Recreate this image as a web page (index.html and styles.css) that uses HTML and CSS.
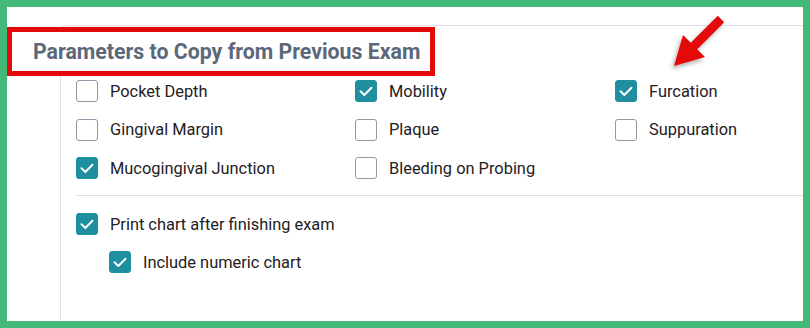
FILE: index.html
```html
<!DOCTYPE html>
<html>
<head>
<meta charset="utf-8">
<link rel="stylesheet" href="styles.css">
</head>
<body>
<div class="frame">
  <div class="card">
    <div class="title-box"><h2 class="title">Parameters to Copy from Previous Exam</h2></div>
    <div class="grid">
      <label class="opt"><span class="cb"></span><span>Pocket Depth</span></label>
      <label class="opt"><span class="cb on"><svg viewBox="0 0 22 22"><polyline points="5.5,11.3 9.3,15 16.5,7.8"/></svg></span><span>Mobility</span></label>
      <label class="opt"><span class="cb on"><svg viewBox="0 0 22 22"><polyline points="5.5,11.3 9.3,15 16.5,7.8"/></svg></span><span>Furcation</span></label>
      <label class="opt"><span class="cb"></span><span>Gingival Margin</span></label>
      <label class="opt"><span class="cb"></span><span>Plaque</span></label>
      <label class="opt"><span class="cb"></span><span>Suppuration</span></label>
      <label class="opt"><span class="cb on"><svg viewBox="0 0 22 22"><polyline points="5.5,11.3 9.3,15 16.5,7.8"/></svg></span><span>Mucogingival Junction</span></label>
      <label class="opt"><span class="cb"></span><span>Bleeding on Probing</span></label>
    </div>
    <div class="divider"></div>
    <label class="opt print"><span class="cb on"><svg viewBox="0 0 22 22"><polyline points="5.5,11.3 9.3,15 16.5,7.8"/></svg></span><span>Print chart after finishing exam</span></label>
    <label class="opt sub"><span class="cb on"><svg viewBox="0 0 22 22"><polyline points="5.5,11.3 9.3,15 16.5,7.8"/></svg></span><span>Include numeric chart</span></label>
  </div>
  <svg class="arrow" viewBox="0 0 810 328" width="810" height="328">
    <polygon points="717.8,15.8 724.2,22.2 697.2,49.2 705,57 674,66 683,35 690.8,42.8"/>
  </svg>
</div>
</body>
</html>
```
FILE: styles.css
```css
html, body {
  margin: 0;
  padding: 0;
}
body {
  width: 810px;
  height: 328px;
  overflow: hidden;
  font-family: Roboto, "Liberation Sans", sans-serif;
}
.frame {
  position: relative;
  box-sizing: border-box;
  width: 810px;
  height: 328px;
  border: 7px solid #43b979;
  background: #fff;
  padding: 18px 0 0 53px;
  overflow: hidden;
}
.card {
  box-sizing: border-box;
  height: 100%;
  border-top: 1px solid #dde1e7;
  border-left: 1px solid #dde1e7;
  border-top-left-radius: 6px;
  padding-left: 15px;
}
.title-box {
  box-sizing: border-box;
  width: 428px;
  height: 49px;
  margin: 1px 0 0 -69px;
  border: 5px solid #e50a0a;
  background: #fff;
  display: flex;
  align-items: center;
  padding-left: 21px;
  position: relative;
}
.title {
  margin: 0;
  font-size: 21.3px;
  font-weight: 700;
  color: #5b6879;
}
.grid {
  display: grid;
  grid-template-columns: 279px 260px 1fr;
  row-gap: 16.5px;
  margin-top: 4px;
}
.opt {
  display: flex;
  align-items: center;
  gap: 12px;
  height: 22px;
  font-size: 16.4px;
  color: #1f2023;
}
.cb {
  box-sizing: border-box;
  width: 22px;
  height: 22px;
  flex: none;
  border: 1.5px solid #8d9aa6;
  border-radius: 3px;
  background: #fff;
  display: flex;
  align-items: center;
  justify-content: center;
}
.cb.on {
  background: #1f8e9f;
  border-color: #1f8e9f;
}
.cb svg {
  width: 22px;
  height: 22px;
  flex: none;
}
.cb polyline {
  fill: none;
  stroke: #fff;
  stroke-width: 2;
  stroke-linecap: round;
  stroke-linejoin: round;
}
.divider {
  height: 1px;
  background: #dde1e7;
  margin-top: 16px;
}
.print {
  margin-top: 17px;
}
.sub {
  margin-top: 16px;
  margin-left: 33px;
}
.arrow {
  position: absolute;
  left: -7px;
  top: -7px;
  pointer-events: none;
  filter: drop-shadow(-2px 3px 2px rgba(0, 0, 0, 0.3));
}
.arrow polygon {
  fill: #e50a0a;
}
```
